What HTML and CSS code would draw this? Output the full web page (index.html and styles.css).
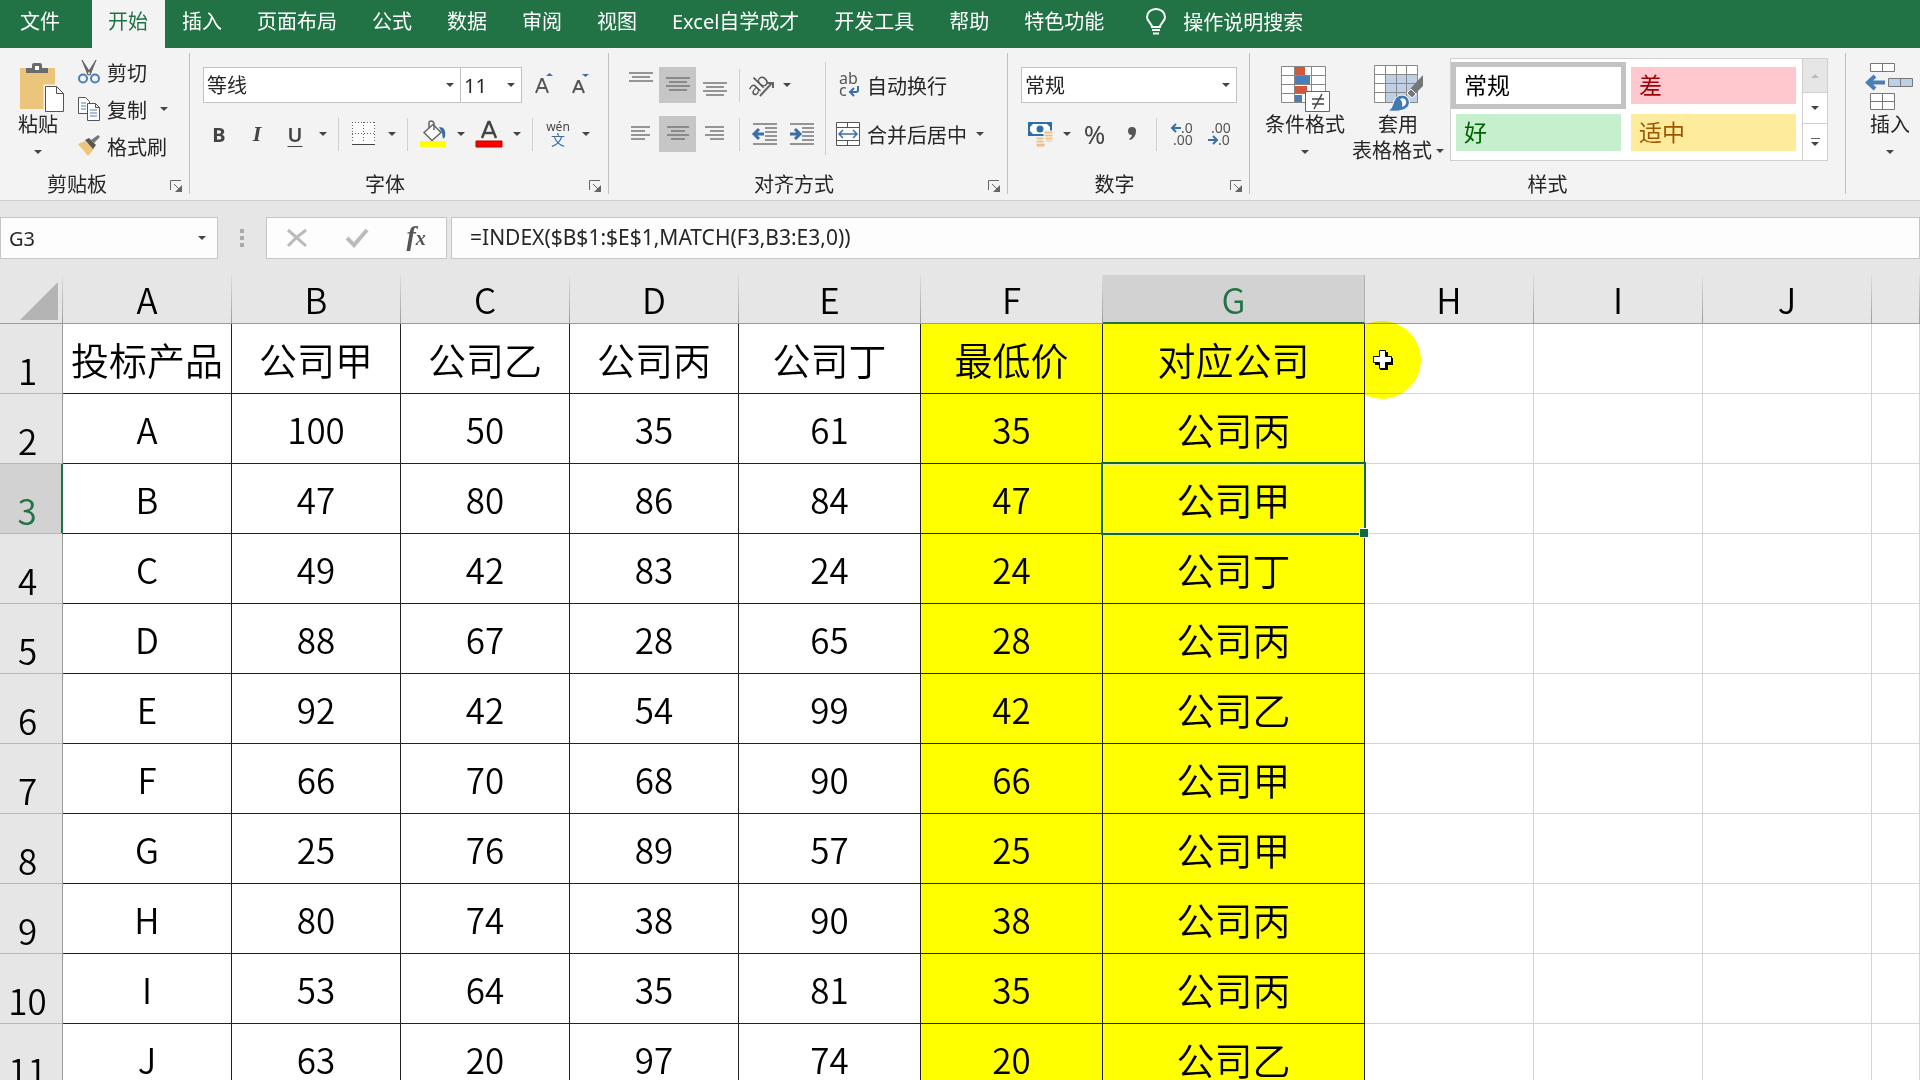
FILE: index.html
```html
<!DOCTYPE html>
<html lang="zh-CN">

<head>
    <meta charset="UTF-8" />
    <meta name="viewport" content="width=device-width, initial-scale=1" />
    <title>Excel</title>
    <link rel="stylesheet" href="styles.css">
</head>

<body>
    <nav class="tabs">
        <button class="tab file">文件</button>
        <button class="tab active">开始</button>
        <button class="tab">插入</button>
        <button class="tab">页面布局</button>
        <button class="tab">公式</button>
        <button class="tab">数据</button>
        <button class="tab">审阅</button>
        <button class="tab">视图</button>
        <button class="tab">Excel自学成才</button>
        <button class="tab">开发工具</button>
        <button class="tab">帮助</button>
        <button class="tab">特色功能</button>
        <button class="tell-me">
            <svg width="22" height="28" viewBox="0 0 22 28" fill="none" stroke="#fff" stroke-width="2"><path d="M7 19c0-4-5-5-5-10a9 8 0 0 1 18 0c0 5-5 6-5 10z" /><path d="M7 22h8M8 25.500h6" /></svg>
            <span>操作说明搜索</span>
        </button>
    </nav>

    <div class="ribbon">
        <section class="group clipboard">
            <div class="group-body">
                <button class="big paste">
                    <svg width="54" height="48" viewBox="0 0 54 48"><path d="M9 4h35v41H9z" fill="#eac57b" /><path d="M15 9V4h6V1q0-2 2-2h6q2 0 2 2v3h6v5z" fill="#6b6b6b" /><path d="M24 2h4v4h-4z" fill="#fff" /><path d="M34 22h13l7 7v19H34z" fill="#f3f3f3" stroke="#f3f3f3" stroke-width="3" /><path d="M34.500 22.500h11l7 7v18h-18zM45.500 22.500v7h7" fill="#fff" stroke="#555" /></svg>
                    <span>粘贴</span>
                    <i class="arrow"></i>
                </button>
                <div class="clip-list">
                    <button class="text-tool">
                        <svg width="22" height="24" viewBox="0 0 22 24" fill="none"><path d="M4 0l9 14-3 1zM18 0L9 14l3 1z" fill="#666" stroke="#666" /><circle cx="5" cy="18.500" r="4" stroke="#4a7ebb" stroke-width="2" /><circle cx="17" cy="18.500" r="4" stroke="#4a7ebb" stroke-width="2" /></svg>
                        <span>剪切</span>
                    </button>
                    <div class="row">
                        <button class="text-tool">
                            <svg width="22" height="24" viewBox="0 0 22 24" fill="#fff" stroke="#555"><path d="M.500.500h7l4 4v12H.500z" /><path d="M9.500 6.500h8l4 4v13h-12zM17.500 6.500v4h4" /><path d="M3 6h5M3 9h5M3 12h5M12 13h7M12 16h7M12 19h7" stroke="#4a7ebb" /></svg>
                            <span>复制</span>
                        </button>
                        <button class="drop" aria-label="复制选项"><i class="arrow"></i></button>
                    </div>
                    <button class="text-tool">
                        <svg width="22" height="22" viewBox="0 0 22 22"><path d="M0 9l7-3 9 8-6 7z" fill="#eac57b" /><path d="M7 5l4-2 7 7-3 4z" fill="#555" /><path d="M13 5l7-5 2 2-6 6z" fill="#777" /></svg>
                        <span>格式刷</span>
                    </button>
                </div>
            </div>
            <div class="group-label"><span>剪贴板</span><button class="launcher" aria-label="剪贴板设置"><svg width="12" height="12" viewBox="0 0 12 12"><path d="M.500 10V.500H11M4 4l6 6" fill="none" stroke="#666" /><path d="M12 5v7H5z" fill="#666" /></svg></button></div>
        </section>

        <section class="group font">
            <div class="group-body rows">
                <div class="row combos">
                    <select class="combo family" aria-label="字体"><option>等线</option></select>
                    <select class="combo size" aria-label="字号"><option>11</option></select>
                    <button class="tool grow" aria-label="增大字号"><svg width="22" height="26" viewBox="0 0 22 26"><path d="M3 21L8.500 7h1L15 21M5 16h8" fill="none" stroke="#555" stroke-width="2" /><path d="M13 4l3.500-3L20 4z" fill="#3a6ea5" /></svg></button>
                    <button class="tool" aria-label="减小字号"><svg width="22" height="26" viewBox="0 0 22 26"><path d="M4 21L9 9h1l5 12M6 17h7" fill="none" stroke="#555" stroke-width="2" /><path d="M13 2h7l-3.500 3z" fill="#3a6ea5" /></svg></button>
                </div>
                <div class="row">
                    <button class="tool bold">B</button>
                    <button class="tool italic">I</button>
                    <button class="tool underline">U</button>
                    <button class="drop" aria-label="下划线"><i class="arrow"></i></button>
                    <span class="sep"></span>
                    <button class="tool" aria-label="边框"><svg width="24" height="24" viewBox="0 0 24 24"><path d="M0 .500h23V23H0z" fill="#fff" /><path d="M0 .500h23M.500 0v21M11.500 0v21M22.500 0v21M0 11.500h23" fill="none" stroke="#666" stroke-dasharray="1 2" /><path d="M0 22.500h23" stroke="#444" /></svg></button>
                    <button class="drop" aria-label="边框选项"><i class="arrow"></i></button>
                    <span class="sep"></span>
                    <button class="tool" aria-label="填充颜色"><svg width="28" height="28" viewBox="0 0 28 28"><path d="M1 21h26v6H1z" fill="#ff0" /><path d="M5 12.500l9-8 8 8-9 8z" fill="#fff" stroke="#666" stroke-width="1.500" /><path d="M10 8V3q0-2 2-2t3 2v7" fill="none" stroke="#666" stroke-width="1.500" /><path d="M20 7c5 0 7 3 6 10l-2 2-1-6z" fill="#3a6ea5" /></svg></button>
                    <button class="drop" aria-label="填充颜色选项"><i class="arrow"></i></button>
                    <button class="tool" aria-label="字体颜色"><svg width="28" height="28" viewBox="0 0 28 28"><path d="M1 21h26v6H1z" fill="#f00" stroke="#b00" stroke-width="1" /><path d="M7 18l6.500-16h1L21 18M9.500 13h9" fill="none" stroke="#444" stroke-width="2.500" /></svg></button>
                    <button class="drop" aria-label="字体颜色选项"><i class="arrow"></i></button>
                    <span class="sep"></span>
                    <button class="tool phonetic"><span>wén</span><span class="blue">文</span></button>
                    <button class="drop" aria-label="拼音选项"><i class="arrow"></i></button>
                </div>
            </div>
            <div class="group-label"><span>字体</span><button class="launcher" aria-label="字体设置"><svg width="12" height="12" viewBox="0 0 12 12"><path d="M.500 10V.500H11M4 4l6 6" fill="none" stroke="#666" /><path d="M12 5v7H5z" fill="#666" /></svg></button></div>
        </section>

        <section class="group align">
            <div class="group-body">
                <div class="rows">
                    <div class="row">
                        <button class="tool" aria-label="顶端对齐"><svg width="24" height="26" viewBox="0 0 24 26" stroke="#777" stroke-width="1.500"><path d="M0 1h24M3 5h18M0 9h24" /></svg></button>
                        <button class="tool on" aria-label="垂直居中"><svg width="24" height="26" viewBox="0 0 24 26" stroke="#777" stroke-width="1.500"><path d="M0 6h24M3 10h18M0 14h24M3 18h18" /></svg></button>
                        <button class="tool" aria-label="底端对齐"><svg width="24" height="26" viewBox="0 0 24 26" stroke="#777" stroke-width="1.500"><path d="M0 11h24M3 15h18M0 19h24M3 23h18" /></svg></button>
                        <span class="sep"></span>
                        <button class="tool narrow" aria-label="方向"><svg width="26" height="26" viewBox="0 0 26 26"><text x="-2" y="19" transform="rotate(-45 9 13)" font-size="19" class="svg-text">ab</text><path d="M11 24L23 11M18 11h6v5" fill="none" stroke="#666" stroke-width="2" /></svg></button>
                        <button class="drop" aria-label="方向选项"><i class="arrow"></i></button>
                    </div>
                    <div class="row">
                        <button class="tool" aria-label="左对齐"><svg width="20" height="16" viewBox="0 0 20 16" stroke="#777" stroke-width="1.500"><path d="M0 1h19M0 5h14M0 9h19M0 13h14" /></svg></button>
                        <button class="tool on" aria-label="居中"><svg width="22" height="16" viewBox="0 0 22 16" stroke="#777" stroke-width="1.500"><path d="M0 1h22M4 5h14M0 9h22M4 13h14" /></svg></button>
                        <button class="tool" aria-label="右对齐"><svg width="20" height="16" viewBox="0 0 20 16" stroke="#777" stroke-width="1.500"><path d="M0 1h19M5 5h14M0 9h19M5 13h14" /></svg></button>
                        <span class="sep"></span>
                        <button class="tool" aria-label="减少缩进"><svg width="24" height="22" viewBox="0 0 24 22" fill="none"><path d="M0 1h24M12 5h12M12 9h12M12 13h12M12 17h12M0 21h24" stroke="#777" stroke-width="1.500" /><path d="M11 11H2M6 6l-5 5 5 5" stroke="#3a6ea5" stroke-width="3" /></svg></button>
                        <button class="tool" aria-label="增加缩进"><svg width="24" height="22" viewBox="0 0 24 22" fill="none"><path d="M0 1h24M12 5h12M12 9h12M12 13h12M12 17h12M0 21h24" stroke="#777" stroke-width="1.500" /><path d="M0 11h9M5 6l5 5-5 5" stroke="#3a6ea5" stroke-width="3" /></svg></button>
                    </div>
                </div>
                <span class="tall-sep"></span>
                <div class="rows">
                    <button class="text-tool">
                        <svg width="24" height="26" viewBox="0 0 24 26"><text x="3" y="12" font-size="16" class="svg-text">ab</text><text x="3" y="24" font-size="16" class="svg-text">c</text><path d="M22 14v4q0 2-2 2h-6M18 16l-4 4 4 4" fill="none" stroke="#3a6ea5" stroke-width="2" /></svg>
                        <span>自动换行</span>
                    </button>
                    <div class="row">
                        <button class="text-tool">
                            <svg width="24" height="24" viewBox="0 0 24 24" fill="#fff" stroke="#555"><path d="M.500.500h23v23H.500zM.500 5.500h23M.500 18.500h23M11.500.500v5M11.500 18.500v5" /><path d="M3 12h18M7 8l-4 4 4 4M17 8l4 4-4 4" fill="none" stroke="#3a6ea5" stroke-width="1.500" /></svg>
                            <span>合并后居中</span>
                        </button>
                        <button class="drop" aria-label="合并选项"><i class="arrow"></i></button>
                    </div>
                </div>
            </div>
            <div class="group-label"><span>对齐方式</span><button class="launcher" aria-label="对齐设置"><svg width="12" height="12" viewBox="0 0 12 12"><path d="M.500 10V.500H11M4 4l6 6" fill="none" stroke="#666" /><path d="M12 5v7H5z" fill="#666" /></svg></button></div>
        </section>

        <section class="group number">
            <div class="group-body rows">
                <select class="combo" aria-label="数字格式"><option>常规</option></select>
                <div class="row">
                    <button class="tool" aria-label="会计数字格式"><svg width="26" height="26" viewBox="0 0 26 26"><path d="M1 1h24v14H1z" fill="#2f6fa8" /><path d="M6 3h14l3 3v4l-3 3H6l-3-3V6z" fill="#fff" /><circle cx="13" cy="8" r="3.500" fill="#2f6fa8" /><path d="M17 10h9v11h-9zM9 16h9v10H9z" fill="#eac08a" stroke="#f3f3f3" /><path d="M17 13h9M17 16h9M17 19h9M9 19h9M9 22h9" stroke="#fff" /></svg></button>
                    <button class="drop" aria-label="会计格式选项"><i class="arrow"></i></button>
                    <button class="tool percent">%</button>
                    <button class="tool" aria-label="千位分隔样式"><svg width="10" height="16" viewBox="0 0 10 16"><path d="M5 1a3.500 3.500 0 0 1 4 4c0 5-3 8-6 9l-1-1c2-1 3-3 3-4a3.500 3.500 0 0 1 0-8z" fill="#555" /></svg></button>
                    <span class="sep"></span>
                    <button class="tool" aria-label="增加小数位数"><svg width="22" height="24" viewBox="0 0 22 24"><text x="10" y="11" font-size="14" class="svg-text">.0</text><text x="2" y="23" font-size="14" class="svg-text">.00</text><path d="M10 6H2M5 2L1 6l4 4" fill="none" stroke="#3a6ea5" stroke-width="2" /></svg></button>
                    <button class="tool" aria-label="减少小数位数"><svg width="22" height="24" viewBox="0 0 22 24"><text x="3" y="11" font-size="14" class="svg-text">.00</text><text x="10" y="23" font-size="14" class="svg-text">.0</text><path d="M0 18h8M5 14l4 4-4 4" fill="none" stroke="#3a6ea5" stroke-width="2" /></svg></button>
                </div>
            </div>
            <div class="group-label"><span>数字</span><button class="launcher" aria-label="数字设置"><svg width="12" height="12" viewBox="0 0 12 12"><path d="M.500 10V.500H11M4 4l6 6" fill="none" stroke="#666" /><path d="M12 5v7H5z" fill="#666" /></svg></button></div>
        </section>

        <section class="group styles">
            <div class="group-body">
                <button class="big">
                    <svg width="50" height="48" viewBox="0 0 50 48"><path d="M1.500 2.500h44v36h-44z" fill="#fff" /><path d="M15 3h10v9H15zM15 22h12v8H15z" fill="#d0593b" /><path d="M15 12h15v9H15zM15 31h7v8h-7z" fill="#4a7ebb" /><path d="M1.500 2.500h44v36h-44zM1.500 11.500h44M1.500 20.500h44M1.500 29.500h44M14.500 2.500v36M31.500 2.500v36" fill="none" stroke="#888" /><path d="M25.500 27.500h24v20h-24z" fill="#fff" stroke="#666" /><path d="M32 35h12M32 40h12M42 30l-8 15" stroke="#444" stroke-width="1.500" /></svg>
                    <span>条件格式</span>
                    <i class="arrow"></i>
                </button>
                <button class="big wide">
                    <svg width="50" height="48" viewBox="0 0 50 48"><path d="M1.500 1.500h43v37h-43z" fill="#fff" /><path d="M12 11h33v28H12z" fill="#bdd0e6" /><path d="M1.500 1.500h43v37h-43zM1.500 10.500h43M1.500 19.500h43M1.500 28.500h43M12.500 1.500v37M23.500 1.500v37M33.500 1.500v37" fill="none" stroke="#888" /><path d="M50 11v11l-9 9-5-5z" fill="#777" /><path d="M38 25l5 5-4 4-5-5z" fill="#777" stroke="#fff" /><path d="M14 47c5-1 5-6 8-12 3-5 10-5 13-1 3 5 1 10-5 12-5 2-11 1-16 1z" fill="#4179b5" stroke="#fff" /><path d="M27 35q5-2 6 2t-4 6q1-5-2-8z" fill="#fff" /></svg>
                    <span>套用</span>
                    <span class="line">表格格式<i class="arrow"></i></span>
                </button>
                <div class="gallery">
                    <div class="swatches">
                        <button class="swatch selected">常规</button>
                        <button class="swatch bad">差</button>
                        <button class="swatch good">好</button>
                        <button class="swatch neutral">适中</button>
                    </div>
                    <div class="gallery-nav">
                        <button class="off" aria-label="上一行"><i class="arrow up"></i></button>
                        <button aria-label="下一行"><i class="arrow"></i></button>
                        <button class="more" aria-label="其他"><i class="arrow"></i></button>
                    </div>
                </div>
            </div>
            <div class="group-label"><span>样式</span></div>
        </section>

        <section class="group cells">
            <div class="group-body">
                <button class="big">
                    <svg width="48" height="48" viewBox="0 0 48 48"><path d="M4.500-.500h24v8h-24zM16.500-.500v8M4.500 29.500h24v16h-24zM4.500 37.500h24M16.500 29.500v16" fill="#fff" stroke="#777" /><path d="M22.500 14.500h24v8h-24zM34.500 14.500v8" fill="#bdd0e6" stroke="#777" /><path d="M19 18.500H3M9 12l-7 6.500L9 25" fill="none" stroke="#4a7fb5" stroke-width="4" /></svg>
                    <span>插入</span>
                    <i class="arrow"></i>
                </button>
            </div>
        </section>
    </div>

    <div class="formula-bar">
        <div class="name-box">
            <input type="text" value="G3" aria-label="名称框">
            <button class="drop" aria-label="名称列表"><i class="arrow"></i></button>
        </div>
        <svg class="dots" width="4" height="18" viewBox="0 0 4 18" fill="#aaa"><path d="M0 0h4v4H0zM0 7h4v4H0zM0 14h4v4H0z" /></svg>
        <div class="formula-tools">
            <button aria-label="取消"><svg width="22" height="20" viewBox="0 0 22 20"><path d="M2 2q8 7 18 16M20 2Q10 9 2 18" fill="none" stroke="#bbb" stroke-width="3" /></svg></button>
            <button aria-label="输入"><svg width="24" height="20" viewBox="0 0 24 20"><path d="M2 10l7 7L22 2" fill="none" stroke="#bbb" stroke-width="4" /></svg></button>
            <button class="fx">f<small>x</small></button>
        </div>
        <input class="formula" type="text" value="=INDEX($B$1:$E$1,MATCH(F3,B3:E3,0))" aria-label="编辑栏">
    </div>

    <main class="sheet">
        <table>
            <colgroup>
                <col class="w-head"><col class="w-std"><col class="w-std"><col class="w-std"><col class="w-std"><col class="w-mid"><col class="w-mid"><col class="w-wide"><col class="w-std"><col class="w-std"><col class="w-std"><col>
            </colgroup>
            <thead>
                <tr><th class="corner"><svg width="38" height="38" viewBox="0 0 38 38"><path d="M38 0v38H0z" fill="#b4b4b4" /></svg></th><th>A</th><th>B</th><th>C</th><th>D</th><th>E</th><th>F</th><th class="current">G</th><th>H</th><th>I</th><th>J</th><th></th></tr>
            </thead>
            <tbody>
                <tr class="titles"><th>1</th><td>投标产品</td><td>公司甲</td><td>公司乙</td><td>公司丙</td><td>公司丁</td><td>最低价</td><td>对应公司</td><td class="pointer-cell"><svg class="pointer" width="78" height="78" viewBox="0 0 78 78"><circle cx="39" cy="39" r="39" fill="#ff0" /></svg><svg class="cross" width="22" height="22" viewBox="0 0 22 22"><path d="M8 3h8v6h5v7h-5v5H8v-5H3V9h5z" fill="#000" /><path d="M7.500 1.500h6v6h6v6h-6v6h-6v-6h-6v-6h6z" fill="#fff" stroke="#000" /></svg></td><td></td><td></td><td></td></tr>
                <tr><th>2</th><td>A</td><td>100</td><td>50</td><td>35</td><td>61</td><td>35</td><td>公司丙</td><td></td><td></td><td></td><td></td></tr>
                <tr><th class="current">3</th><td>B</td><td>47</td><td>80</td><td>86</td><td>84</td><td>47</td><td class="selected-cell">公司甲</td><td></td><td></td><td></td><td></td></tr>
                <tr><th>4</th><td>C</td><td>49</td><td>42</td><td>83</td><td>24</td><td>24</td><td>公司丁</td><td></td><td></td><td></td><td></td></tr>
                <tr><th>5</th><td>D</td><td>88</td><td>67</td><td>28</td><td>65</td><td>28</td><td>公司丙</td><td></td><td></td><td></td><td></td></tr>
                <tr><th>6</th><td>E</td><td>92</td><td>42</td><td>54</td><td>99</td><td>42</td><td>公司乙</td><td></td><td></td><td></td><td></td></tr>
                <tr><th>7</th><td>F</td><td>66</td><td>70</td><td>68</td><td>90</td><td>66</td><td>公司甲</td><td></td><td></td><td></td><td></td></tr>
                <tr><th>8</th><td>G</td><td>25</td><td>76</td><td>89</td><td>57</td><td>25</td><td>公司甲</td><td></td><td></td><td></td><td></td></tr>
                <tr><th>9</th><td>H</td><td>80</td><td>74</td><td>38</td><td>90</td><td>38</td><td>公司丙</td><td></td><td></td><td></td><td></td></tr>
                <tr><th>10</th><td>I</td><td>53</td><td>64</td><td>35</td><td>81</td><td>35</td><td>公司丙</td><td></td><td></td><td></td><td></td></tr>
                <tr><th>11</th><td>J</td><td>63</td><td>20</td><td>97</td><td>74</td><td>20</td><td>公司乙</td><td></td><td></td><td></td><td></td></tr>
            </tbody>
        </table>
    </main>
</body>

</html>
```
FILE: styles.css
```css
* {
    box-sizing: border-box;
}

body {
    margin: 0;
    height: 100vh;
    display: flex;
    flex-direction: column;
    overflow: hidden;
    background: #e6e6e6;
    color: #262626;
    font-family: "Noto Sans", "Noto Sans CJK SC", sans-serif;
    font-size: 20px;
}

button,
input,
select {
    font: inherit;
    color: inherit;
    margin: 0;
    padding: 0;
    border: none;
    background: none;
    border-radius: 0;
}

button {
    white-space: nowrap;
}

svg {
    display: block;
    flex: none;
    overflow: visible;
}

/* Tabs */
.tabs {
    display: flex;
    flex: none;
    height: 48px;
    background: #217346;
    color: #fff;
}

.tab {
    padding: 0 18px 8px 17px;
}

.tab.file {
    padding: 0 32px 8px 20px;
}

.tab.active {
    padding: 0 17px 8px 16px;
    background: #f3f3f3;
    color: #217346;
}

.tell-me {
    display: flex;
    align-items: center;
    gap: 16px;
    padding: 0 20px 5px 23px;
}

/* Ribbon */
.ribbon {
    display: flex;
    flex: none;
    height: 153px;
    padding: 5px 0 6px;
    background: #f3f3f3;
    border-bottom: 1px solid #cfcfcf;
    overflow: hidden;
}

.group {
    display: flex;
    flex: none;
    flex-direction: column;
    border-right: 1px solid #c0c0c0;
}

.group-body {
    display: flex;
    flex: 1;
}

.group-label {
    display: flex;
    align-items: center;
    height: 22px;
    line-height: 22px;
    margin-bottom: -2px;
}

.group-label span {
    flex: 1;
    text-align: center;
}

.launcher {
    padding: 2px 7px 0 9px;
}

.row {
    display: flex;
    align-items: center;
}

.rows {
    display: flex;
    flex-direction: column;
    justify-content: flex-start;
    gap: 13px;
    padding-top: 14px;
}

.arrow {
    display: block;
    width: 0;
    height: 0;
    border: 4px solid transparent;
    border-top-color: #444;
    border-bottom: none;
}

.arrow.up {
    border-top: none;
    border-bottom: 4px solid #bbb;
}

.tool {
    display: flex;
    align-items: center;
    justify-content: center;
    width: 37px;
    height: 36px;
    color: #444;
}

.tool.on {
    background: #c6c6c6;
}

.tool.narrow {
    width: 32px;
}

.drop {
    display: flex;
    align-items: center;
    justify-content: center;
    width: 18px;
    height: 36px;
}

.sep {
    width: 1px;
    height: 33px;
    margin: 0 6px;
    background: #cfcfcf;
}

.tall-sep {
    width: 1px;
    height: 93px;
    margin: 9px 6px 0 5px;
    background: #cfcfcf;
}

.text-tool {
    display: flex;
    align-items: center;
    gap: 7px;
    height: 36px;
    padding: 0 4px;
}

.big {
    display: flex;
    flex-direction: column;
    align-items: center;
    width: 88px;
    padding-top: 11px;
    line-height: 26px;
}

.big > .arrow {
    margin-top: 12px;
}

.big.wide {
    width: 98px;
}

.line {
    display: flex;
    align-items: center;
    gap: 4px;
}

.svg-text {
    fill: #555;
    font-family: "Noto Sans", sans-serif;
}

.combo {
    height: 36px;
    padding: 0 3px;
    border: 1px solid #c3c3c3;
    background: #fff url("data:image/svg+xml,%3Csvg xmlns='http://www.w3.org/2000/svg' width='8' height='4'%3E%3Cpath d='M0 0h8L4 4z' fill='%23444'/%3E%3C/svg%3E") no-repeat right 6px center;
    -webkit-appearance: none;
    appearance: none;
}

.clipboard .group-body {
    padding: 0 16px 0 2px;
}

.clipboard .group-label span {
    padding-right: 7px;
}

.clipboard .big {
    width: 72px;
}

.clip-list {
    display: flex;
    flex-direction: column;
    gap: 1px;
    padding-top: 1px;
}

.clip-list .drop {
    margin-left: 4px;
}

.font .group-body {
    padding-left: 10px;
    padding-right: 10px;
}

.font .tool {
    width: 38px;
}

.font .combos {
    padding-left: 3px;
}

.font .combos .tool {
    width: 36px;
}

.combo.family {
    width: 258px;
}

.combo.size {
    width: 62px;
    margin-left: -1px;
}

.grow {
    margin-left: 4px;
}

.bold {
    font-weight: 700;
}

.italic {
    font-family: "Liberation Serif", serif;
    font-style: italic;
    font-weight: 700;
    font-size: 22px;
}

.underline {
    font-weight: 600;
    text-decoration: underline;
    text-decoration-thickness: 1px;
    text-underline-offset: 4px;
}

.phonetic {
    flex-direction: column;
    font-size: 12px;
    line-height: 12px;
}

.phonetic .blue {
    color: #3a6ea5;
    font-size: 14px;
    line-height: 14px;
}

.align .group-body {
    padding: 0 18px 0 13px;
}

.number .group-body {
    padding-left: 13px;
    padding-right: 12px;
}

.percent {
    font-size: 26px;
}

.styles .group-body {
    padding: 0 17px 0 11px;
}

.gallery {
    display: flex;
    height: 103px;
    margin: 5px 0 0 3px;
    border: 1px solid #cfcfcf;
    background: #fff;
}

.swatches {
    display: grid;
    grid-template-columns: 165px 165px;
    grid-template-rows: 37px 37px;
    gap: 10px;
    padding: 8px 6px 8px 5px;
}

.swatch {
    padding: 0 0 2px 8px;
    text-align: left;
    font-size: 23px;
    line-height: 34px;
}

.swatch.selected {
    outline: 5px solid #c3c3c3;
    color: #000;
}

.swatch.bad {
    background: #ffc7ce;
    color: #9c0006;
}

.swatch.good {
    background: #c6efce;
    color: #006100;
}

.swatch.neutral {
    background: #ffeb9c;
    color: #9c5700;
}

.gallery-nav {
    display: grid;
    grid-template-rows: 34px 31px 36px;
    width: 25px;
    border-left: 1px solid #cfcfcf;
}

.gallery-nav button {
    display: flex;
    flex-direction: column;
    align-items: center;
    justify-content: center;
    gap: 3px;
    border-bottom: 1px solid #cfcfcf;
}

.gallery-nav button:last-child {
    border-bottom: none;
}

.gallery-nav .off {
    background: #e6e6e6;
}

.gallery-nav .more::before {
    content: "";
    width: 9px;
    height: 1px;
    background: #666;
}

.cells {
    border-right: none;
}

.cells .group-body {
    padding-left: 8px;
}

.cells .big {
    width: 72px;
}

/* Formula bar */
.formula-bar {
    display: flex;
    align-items: center;
    flex: none;
    height: 74px;
    padding: 16px 0;
}

.name-box,
.formula-tools,
.formula {
    height: 42px;
    border: 1px solid #c6c6c6;
    background: #fdfdfd;
}

.name-box {
    display: flex;
    align-items: center;
    width: 218px;
    padding: 0 6px 0 8px;
}

.name-box input {
    flex: 1;
    min-width: 0;
}

.dots {
    margin: 0 22px;
}

.formula-tools {
    display: flex;
    width: 181px;
}

.formula-tools button {
    display: flex;
    flex: 1;
    align-items: center;
    justify-content: center;
}

.formula-tools .fx {
    align-items: baseline;
    padding-top: 2px;
    font-family: "Liberation Serif", serif;
    font-style: italic;
    font-weight: 700;
    font-size: 28px;
    color: #555;
}

.fx small {
    font-size: 20px;
}

.formula {
    flex: 1;
    min-width: 0;
    margin-left: 4px;
    padding: 0 18px 2px;
    font-size: 21px;
}

/* Sheet */
.sheet {
    flex: 1;
    min-height: 0;
}

table {
    width: 100%;
    table-layout: fixed;
    border-collapse: separate;
    border-spacing: 0;
    background: #fff;
    color: #000;
    font-family: "Noto Sans CJK SC", sans-serif;
    font-size: 35px;
    line-height: 44px;
}

.w-head {
    width: 63px;
}

.w-std {
    width: 169px;
}

.w-mid {
    width: 182px;
}

.w-wide {
    width: 262px;
}

th,
td {
    padding: 0;
    text-align: center;
    font-weight: 350;
}

thead th {
    height: 49px;
    background: #e6e6e6;
    border-bottom: 1px solid #9b9b9b;
    border-right: 1px solid;
    border-image: linear-gradient(#e0e0e0, #9b9b9b) 1;
}

thead th.current {
    background: #d2d2d2;
    color: #217346;
    border-image: none;
    border-right-color: #b0b0b0;
    border-bottom: 2px solid #217346;
}

.corner svg {
    margin: 4px 4px 0 auto;
}

tbody th {
    height: 70px;
    padding: 0 7px 1px 0;
    background: #e6e6e6;
    border-right: 1px solid #9b9b9b;
    border-bottom: 1px solid #b8b8b8;
    vertical-align: bottom;
}

tbody th.current {
    background: #d2d2d2;
    color: #217346;
    border-right: 2px solid #217346;
}

td {
    border-right: 1px solid #d4d4d4;
    border-bottom: 1px solid #d4d4d4;
}

/* The data block, A to G */
td:nth-child(-n+8) {
    border-color: #222;
}

td:nth-child(7),
td:nth-child(8) {
    background: #ff0;
}

.titles td,
td:nth-child(8) {
    font-size: 38px;
}

.selected-cell {
    position: relative;
}

.selected-cell::before {
    content: "";
    position: absolute;
    inset: -2px;
    border: 2px solid #0f6b3c;
    box-shadow: inset 0 0 0 1px #e8f0a0;
}

.selected-cell::after {
    content: "";
    position: absolute;
    right: -5px;
    bottom: -5px;
    width: 8px;
    height: 8px;
    border: 1px solid #fff;
    background: #0f6b3c;
}

.pointer-cell {
    position: relative;
}

.pointer,
.cross {
    position: absolute;
}

.pointer {
    left: -22px;
    top: -3px;
    mix-blend-mode: multiply;
}

.cross {
    left: 7px;
    top: 25px;
}
```
